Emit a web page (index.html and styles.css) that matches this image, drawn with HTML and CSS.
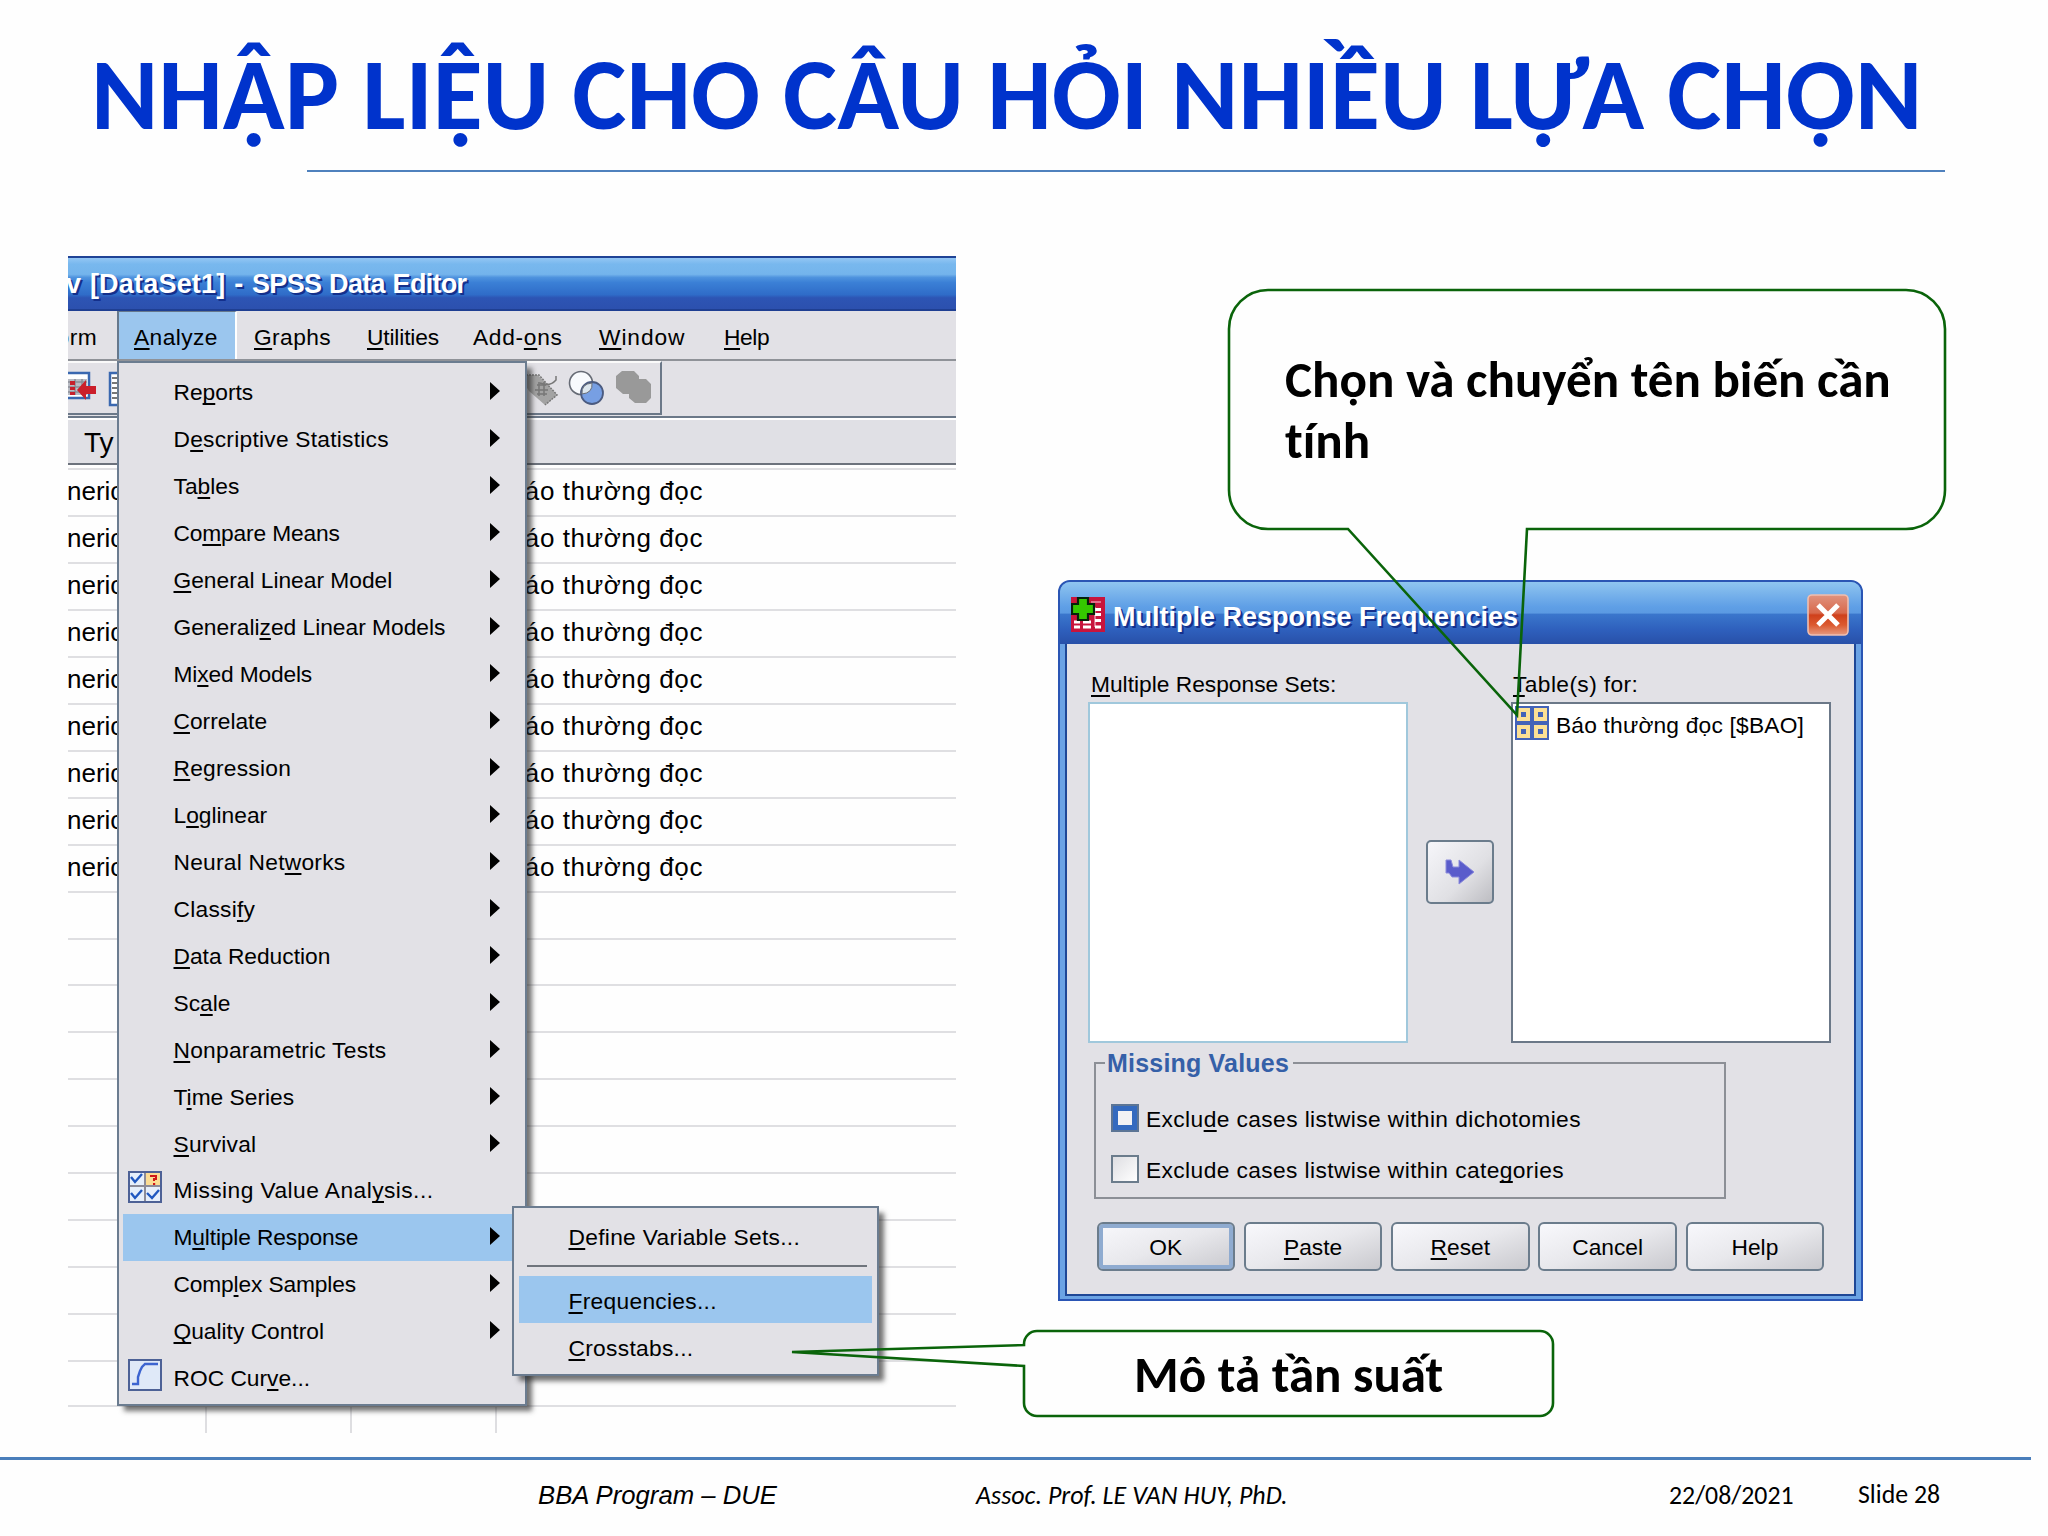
FILE: index.html
```html
<!DOCTYPE html>
<html lang="vi">
<head>
<meta charset="utf-8">
<title>Nhập liệu cho câu hỏi nhiều lựa chọn</title>
<link rel="stylesheet" href="styles.css">
</head>
<body>
<main class="slide">
  <header class="slide-head"><h1>NH<span class="hat">Ậ</span>P LI<span class="hat">Ệ</span>U CHO CÂU HỎI NHIỀU LỰA CHỌN</h1></header>

  <section class="canvas">
    <div class="editor">
      <div class="editor-title">v [DataSet1] - <span>SPSS Data Editor</span></div>
      <nav class="menubar">
        <span class="m-form"><span>orm</span></span>
        <span class="m-analyze"><u>A</u>nalyze</span>
        <span class="m-graphs"><u>G</u>raphs</span>
        <span class="m-util"><u>U</u>tilities</span>
        <span class="m-addons">Add-<u>o</u>ns</span>
        <span class="m-window"><u>W</u>indow</span>
        <span class="m-help"><u>H</u>elp</span>
      </nav>
      <div class="toolbar">
        <div class="tools">
          <svg class="tools-left" width="49" height="52" viewBox="0 0 49 52">
            <path d="M-2 10H21V35H-2" fill="#fff" stroke="#3a68b0" stroke-width="2.5"/>
            <path d="M0 16H19V32H0" fill="#b9bcc4"/>
            <path d="M0 19H19M0 24H19M0 29H19M7 16V32M14 16V32" stroke="#8a8d96" stroke-width="1.5"/>
            <path d="M2 18h5v4H2zM2 24h5v3H2zM2 29h5v3H2z" fill="#c6202c"/>
            <path d="M9 27L18 17V23H28V31H18V37Z" fill="#cb1f2b"/>
            <path d="M50 10H42V42H50" fill="#fff" stroke="#3a68b0" stroke-width="2.5"/>
            <path d="M44 15H50M44 20H50M44 25H50M44 30H50M44 35H50" stroke="#777" stroke-width="2"/>
          </svg>
          <svg class="tools-right" width="134" height="52" viewBox="0 0 134 52">
            <path d="M-2 12H12L31 32L19 42L3 28L-2 20Z" fill="#a3a3a3"/>
            <path d="M0 12H13L31 32L19 42" fill="none" stroke="#777" stroke-width="1.5" stroke-dasharray="2 1"/>
            <path d="M9 27H22M11 22H20M13 19V33M18 19V33M11 31H21" stroke="#777" stroke-width="1.5"/>
            <path d="M14 20Q24 24 30 17V13" fill="none" stroke="#777" stroke-width="1.5"/>
            <circle cx="55" cy="20" r="11.5" fill="#f8fafd" stroke="#666b75" stroke-width="1.6"/>
            <circle cx="66" cy="30" r="11" fill="#779fe3" stroke="#4b5b80" stroke-width="1.8"/>
            <path d="M56 31Q55 21 66 20Q67 30 56 31Z" fill="#dce6ee" stroke="#666b75"/>
            <path d="M96 8H108L113 13V16H120L125 21V35L120 40H109L103 35V31H97L90 25V13Z" fill="#999"/>
          </svg>
        </div>
      </div>
      <div class="grid-head"><span>Ty</span></div>
      <div class="grid-body">
        <div class="grid-row"><span>neric</span><span>áo thường đọc</span></div>
        <div class="grid-row"><span>neric</span><span>áo thường đọc</span></div>
        <div class="grid-row"><span>neric</span><span>áo thường đọc</span></div>
        <div class="grid-row"><span>neric</span><span>áo thường đọc</span></div>
        <div class="grid-row"><span>neric</span><span>áo thường đọc</span></div>
        <div class="grid-row"><span>neric</span><span>áo thường đọc</span></div>
        <div class="grid-row"><span>neric</span><span>áo thường đọc</span></div>
        <div class="grid-row"><span>neric</span><span>áo thường đọc</span></div>
        <div class="grid-row"><span>neric</span><span>áo thường đọc</span></div>
        <div class="grid-row"></div><div class="grid-row"></div><div class="grid-row"></div><div class="grid-row"></div>
        <div class="grid-row"></div><div class="grid-row"></div><div class="grid-row"></div><div class="grid-row"></div>
        <div class="grid-row"></div><div class="grid-row"></div><div class="grid-row"></div>
        <div class="grid-cols"><i></i><i></i><i></i></div>
      </div>
    </div>

    <ul class="menu">
      <li class="sub">Re<u>p</u>orts</li>
      <li class="sub loose">D<u>e</u>scriptive Statistics</li>
      <li class="sub">Ta<u>b</u>les</li>
      <li class="sub tight">Co<u>m</u>pare Means</li>
      <li class="sub"><u>G</u>eneral Linear Model</li>
      <li class="sub">Generali<u>z</u>ed Linear Models</li>
      <li class="sub tight">Mi<u>x</u>ed Models</li>
      <li class="sub"><u>C</u>orrelate</li>
      <li class="sub loose"><u>R</u>egression</li>
      <li class="sub">L<u>o</u>glinear</li>
      <li class="sub loose">Neural Net<u>w</u>orks</li>
      <li class="sub loose">Classi<u>f</u>y</li>
      <li class="sub"><u>D</u>ata Reduction</li>
      <li class="sub">Sc<u>a</u>le</li>
      <li class="sub loose"><u>N</u>onparametric Tests</li>
      <li class="sub">T<u>i</u>me Series</li>
      <li class="sub loose"><u>S</u>urvival</li>
      <li class="looser"><svg width="34" height="32" viewBox="0 0 34 32">
        <rect x="1" y="1" width="32" height="30" fill="#e6effb" stroke="#4d6196" stroke-width="2"/>
        <rect x="18" y="2" width="14" height="12" fill="#fbdc94"/>
        <path d="M17 2V30M2 15H32" stroke="#8b8b98" stroke-width="2"/>
        <path d="M3 6L7 11L14 3M3 22L7 27L14 19M19 22L24 27L31 19" fill="none" stroke="#2058c0" stroke-width="2.4"/>
        <path d="M22 5H28V8H26V10" fill="none" stroke="#d01818" stroke-width="2"/><rect x="25" y="12" width="2.2" height="2" fill="#d01818"/>
      </svg>Missing Value Anal<u>y</u>sis...</li>
      <li class="sub tight active">M<u>u</u>ltiple Response</li>
      <li class="sub tight">Comp<u>l</u>ex Samples</li>
      <li class="sub"><u>Q</u>uality Control</li>
      <li><svg width="34" height="32" viewBox="0 0 34 32">
        <rect x="1" y="1" width="32" height="30" fill="#dfe9f8" stroke="#4d6196" stroke-width="2"/>
        <path d="M4 25H10V18L12 12L14 8L17 5H30" fill="none" stroke="#3c64d0" stroke-width="2.4"/>
      </svg>ROC Cur<u>v</u>e...</li>
    </ul>

    <ul class="menu submenu">
      <li><u>D</u>efine Variable Sets...</li>
      <li class="rule"></li>
      <li class="low active"><u>F</u>requencies...</li>
      <li class="low"><u>C</u>rosstabs...</li>
    </ul>

    <div class="dialog">
      <div class="dialog-title">
        <svg width="35" height="36" viewBox="0 0 35 36">
          <rect x="0" y="0" width="34" height="35" fill="#c8143c"/>
          <path d="M20 5H30M24 10V30" stroke="#e0708c" stroke-width="2"/>
          <path d="M24 12.500H30M24 17.500H30M3 25H9M12 25H20M24 23.500H30M3 30H9M12 30H20M24 30H30" stroke="#fff" stroke-width="3"/>
          <path d="M7 1H17V7H23V17H17V23H7V17H1V7H7Z" fill="#35c800" stroke="#05200a" stroke-width="2.2"/>
        </svg>
        <span>Multiple Response Frequencies</span>
        <svg width="42" height="42" viewBox="0 0 42 42">
          <defs><linearGradient id="close" x1="0" y1="0" x2="0" y2="1"><stop offset="0" stop-color="#e0937f"/><stop offset=".45" stop-color="#d8694c"/><stop offset=".5" stop-color="#cf401b"/><stop offset=".75" stop-color="#dc5a30"/><stop offset="1" stop-color="#e59a80"/></linearGradient></defs>
          <rect x="1" y="1" width="40" height="40" rx="4" fill="url(#close)" stroke="#efbfb0" stroke-width="1.6"/>
          <path d="M11 11L31 31M31 11L11 31" stroke="#fff" stroke-width="5"/>
        </svg>
      </div>
      <div class="dialog-body">
        <div class="lists">
          <div class="list-col">
            <label><u>M</u>ultiple Response Sets:</label>
            <div class="list source"></div>
          </div>
          <div class="move">
            <svg width="34" height="30" viewBox="0 0 34 30"><path d="M3 3L8 3L10 10H16V3L31 15L16 27V20H9L6 16H3L3 9Z" fill="#5a5ccb" stroke="#8b8bdc"/></svg>
          </div>
          <div class="list-col">
            <label class="l-tables"><u>T</u>able(s) for:</label>
            <div class="list target">
              <svg width="34" height="34" viewBox="0 0 34 34">
                <rect width="34" height="34" fill="#4363b8"/>
                <path d="M2 2H15V15H2ZM19 2H32V15H19ZM2 19H15V32H2ZM19 19H32V32H19Z" fill="#fce094"/>
                <path d="M6 6H11V11H6ZM23 6H28V11H23ZM6 23H11V28H6ZM23 23H28V28H23Z" fill="#4363b8"/>
              </svg>
              <span>Báo thường đọc [$BAO]</span>
            </div>
          </div>
        </div>
        <fieldset class="missing">
          <legend>Missing Values</legend>
          <div class="check focus"><i></i><span>Exclu<u>d</u>e cases listwise within dichotomies</span></div>
          <div class="check"><i></i><span>Exclude cases listwise within cate<u>g</u>ories</span></div>
        </fieldset>
        <div class="buttons">
          <span class="btn default">OK</span>
          <span class="btn"><u>P</u>aste</span>
          <span class="btn"><u>R</u>eset</span>
          <span class="btn">Cancel</span>
          <span class="btn">Help</span>
        </div>
      </div>
    </div>

    <div class="callout select">
      <svg width="722" height="432" viewBox="0 0 722 432"><path d="M42 2H680A39 39 0 0 1 719 41V202A39 39 0 0 1 680 241H301L291 427L122 241H42A39 39 0 0 1 3 202V41A39 39 0 0 1 42 2Z" fill="none" stroke="#0a640a" stroke-width="2.6"/></svg>
      <p>Chọn và chuyển tên biến cần<br>tính</p>
    </div>
    <div class="callout describe">
      <svg width="766" height="92" viewBox="0 0 766 92"><path d="M247 3H750A13 13 0 0 1 763 16V75A13 13 0 0 1 750 88H247A13 13 0 0 1 234 75V38L2 24L234 17V16A13 13 0 0 1 247 3Z" fill="none" stroke="#0a640a" stroke-width="2.6"/></svg>
      <p>Mô tả tần suất</p>
    </div>
  </section>

  <footer class="slide-foot">
    <span class="f-program">BBA Program – DUE</span>
    <span class="f-author">Assoc. Prof. LE VAN HUY, PhD.</span>
    <span class="f-date">22/08/2021</span>
    <span class="f-page">Slide 28</span>
  </footer>
</main>
</body>
</html>
```
FILE: styles.css
```css
* { box-sizing: border-box; }
body { margin: 0; background: #fff; color: #000; font-family: "Liberation Sans", Arial, sans-serif; }
u { text-decoration: underline; text-decoration-thickness: 2px; text-underline-offset: 3px; text-decoration-skip-ink: none; }
svg { display: block; flex: none; }

.slide { width: 2048px; height: 1536px; position: relative; display: flex; flex-direction: column; overflow: hidden; background: #fefefe; }
.slide-head { height: 172px; margin: 0 103px 0 307px; border-bottom: 2px solid #4f81bd; }
.slide-head h1 { margin: 0 0 0 -216px; padding-top: 31px; font: 700 102.2px/126px Carlito, Lato, sans-serif; color: #0033cc; white-space: nowrap; }
/* Carlito Bold draws the capitals with circumflex and dot below without their circumflex */
.hat { position: relative; }
.hat::before { content: "ˆ"; position: absolute; left: 0; right: 0; top: -.165em; line-height: 1.22; text-align: center; }
.canvas { flex: 1; }
.slide-foot { width: 2031px; height: 79px; border-top: 3px solid #4a7ebb; display: flex; font: 25.8px/30px Carlito, Lato, sans-serif; padding-top: 20px; white-space: nowrap; }
.f-program { width: 438px; margin-left: 538px; font: italic 25.7px/31px "Liberation Sans", sans-serif; }
.f-author { width: 693px; font-style: italic; font-size: 26px; }
.f-date { width: 189px; }
.f-page { margin-top: -1px; }

/* data editor window */
.editor { position: absolute; left: 68px; top: 256px; width: 888px; height: 1177px; overflow: hidden; display: flex; flex-direction: column; }
.editor-title { height: 55px; border-top: 2px solid #1f4396; border-bottom: 2px solid #1f3f92; font: 700 27px/52px "Liberation Sans", sans-serif; letter-spacing: .2px; text-indent: -2px; word-spacing: 1px; color: #fff; text-shadow: 2px 2px 0 #14308c; white-space: nowrap;
  background: linear-gradient(#93c6f4, #78b8ee 12%, #74b4ec 32%, #4f93de 38%, #3b80d6 48%, #2f6cc8 72%, #2d55b4 78%, #2c50ae); }
.editor-title span { letter-spacing: -.7px; }
.menubar { height: 50px; flex: none; display: flex; background: #e2e1e6; border-bottom: 2px solid #8f9298; font-size: 22.75px; line-height: 52px; letter-spacing: .4px; white-space: nowrap; }
.m-form { width: 49px; display: flex; justify-content: flex-end; padding-right: 20px; overflow: hidden; }
.m-analyze { width: 120px; padding-left: 15px; background: #9bc6ee; border-left: 2px solid #66788c; border-top: 1px solid #66788c; border-right: 2px solid #fff; line-height: 51px; }
.m-graphs { width: 113px; padding-left: 17px; }
.m-util { width: 105px; padding-left: 17px; letter-spacing: -.15px; }
.m-addons { width: 126px; padding-left: 18px; letter-spacing: .7px; }
.m-window { width: 126px; padding-left: 18px; letter-spacing: .9px; }
.m-help { padding-left: 17px; letter-spacing: -.4px; }
.toolbar { height: 57px; flex: none; background: #e2e1e6; border-bottom: 2px solid #6b7888; }
.tools { width: 594px; height: 54px; border-top: 2px solid #fafafa; border-right: 2px solid #6b7888; border-bottom: 2px solid #6b7888; display: flex; justify-content: space-between; }
.grid-head { height: 47px; flex: none; border-top: 2px solid #fff; border-bottom: 2px solid #6c727c; background: #e0e0e5; font-size: 28px; line-height: 45px; padding-left: 16px; }
.grid-body { background: #fefefe; padding-top: 3px; }
.grid-row { height: 46.96px; border-top: 2px solid #dfdfe2; display: flex; font-size: 26px; line-height: 43px; white-space: nowrap; }
.grid-row span:first-child { width: 300px; margin-left: -1px; }
.grid-row span:last-child { width: 336px; text-align: right; letter-spacing: .6px; }
.grid-row:nth-child(20) { border-bottom: 2px solid #dfdfe2; }
.grid-cols { display: flex; height: 26px; padding-left: 137px; gap: 143px; }
.grid-cols i { width: 2px; background: #dedee1; }

/* menus */
.menu { position: absolute; left: 117px; top: 361px; width: 410px; height: 1045px; margin: 0; padding: 6px 3px 0 4px; list-style: none; background: #e2e1e6; border: 2px solid #6b7c90; box-shadow: 6px 6px 5px -1px rgba(40, 40, 40, .65); font-size: 22.75px; white-space: nowrap; }
.menu li { height: 46.97px; line-height: 47px; padding-left: 50.5px; display: flow-root; }
.menu li.sub::after { content: ""; float: right; margin: 13px 22px 0 0; border: solid transparent; border-width: 9px 0 9px 10px; border-left-color: #000; }
.menu li.active { background: #9bc6ee; }
.menu li.tight { letter-spacing: -.15px; }
.menu li.loose { letter-spacing: .25px; }
.menu li.looser { letter-spacing: .45px; }
.menu li svg { float: left; margin: 4px 0 0 -46px; }
.submenu { left: 512px; top: 1206px; width: 367px; height: 170px; padding: 6px 5px 0; letter-spacing: .3px; }
.submenu li { padding-left: 49.5px; }
.submenu li.rule { height: 2px; background: #6f747c; margin: 4px 5px 9px 8px; }
.submenu li.low { line-height: 50px; }

/* dialog window */
.dialog { position: absolute; left: 1058px; top: 580px; width: 805px; height: 721px; border-radius: 12px 12px 0 0; border: 2px solid #2a55b4; background: #6ba3e4; overflow: hidden; }
.dialog-title { height: 62px; display: flex; padding: 15px 12px 0 11px; color: #fff; background: linear-gradient(#8fc5f0, #5f9fe6 40%, #5b9ae2 50%, #3a76cc 52%, #2e5fbc 78%, #2850a8); }
.dialog-title span { flex: 1; margin-left: 7px; font-size: 27px; font-weight: 700; line-height: 45px; margin-top: -2px; text-shadow: 2px 2px 0 #14308c; }
.dialog-title svg:last-child { margin-top: -3px; }
.dialog-body { height: 652px; margin: 0 5px; border: 2px solid #1e4796; border-top: 0; background: #e2e1e6; padding: 26px 23px 0 21px; font-size: 22.75px; white-space: nowrap; }
.lists { display: flex; justify-content: space-between; }
.list-col { width: 320px; }
.list-col label { display: block; height: 32px; line-height: 28px; padding-left: 3px; }
.list-col .l-tables { letter-spacing: .4px; padding-left: 2px; }
.list { height: 341px; background: #fff; border: 2px solid #a0c8dc; }
.list.target { border-color: #6b7888; display: flex; padding: 2px; gap: 7px; line-height: 39px; letter-spacing: .2px; }
.move { width: 68px; height: 64px; margin-top: 170px; border: 2px solid #6b7c8c; border-radius: 5px; background: linear-gradient(135deg, #f6f6fa, #e0e0e4 60%, #bdbdc2); display: flex; align-items: center; justify-content: center; }
.missing { width: 632px; height: 148px; margin: 8px 0 0 6px; padding: 29px 14px 0 15px; border: 2px solid #8c8f96; }
.missing legend { margin-left: -6px; padding: 0 4px 0 2px; font-size: 25px; font-weight: 700; color: #3560a8; line-height: 24px; letter-spacing: .2px; }
.check { display: flex; gap: 7px; height: 51px; line-height: 31px; letter-spacing: .4px; }
.check i { width: 28px; height: 28px; border: 2px solid #6b7c8c; background: linear-gradient(135deg, #dedee2, #fff); }
.check.focus i { border: 2px solid #5c7595; background: #f2f2f4; box-shadow: inset 0 0 0 5px #346abf; }
.buttons { display: flex; gap: 8.8px; margin: 23px 0 0 8.5px; }
.btn { width: 138.5px; height: 49px; border: 2px solid #6b7c8c; border-radius: 6px; text-align: center; line-height: 47px; background: linear-gradient(160deg, #f8f8fc, #e8e8ec 50%, #c9c9ce); }
.btn.default { box-shadow: inset 0 0 0 4px #8fabd0; }

/* callouts */
.callout { position: absolute; white-space: nowrap; font: 700 51.1px/61px Carlito, Lato, sans-serif; font-variant-ligatures: none; }
.callout p { margin: 0; position: absolute; }
.select { left: 1226px; top: 288px; }
.select p { left: 59px; top: 61px; }
.describe { left: 790px; top: 1328px; }
.describe p { left: 344px; top: 16px; }
```
